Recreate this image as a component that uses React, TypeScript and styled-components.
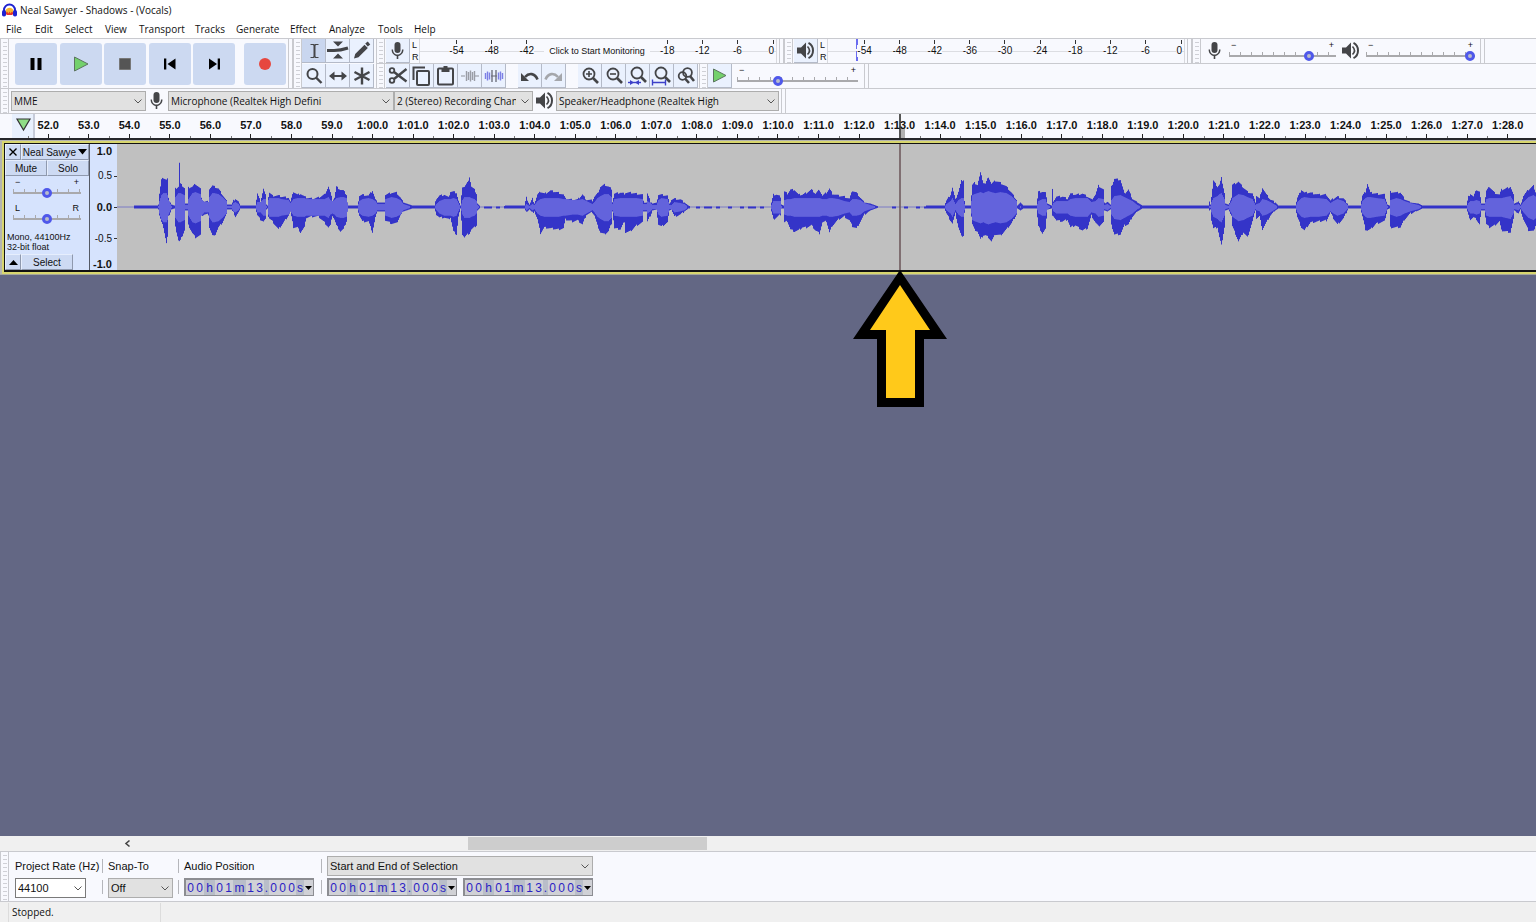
import React from 'react';
import styled, { createGlobalStyle, css } from 'styled-components';

const ui = '"Open Sans", "Noto Sans", sans-serif';
const arial = '"Liberation Sans", Arial, sans-serif';
const line = '#c9cacf';
const dock = '#f8f9fe';
const ink = '#444548';

const Global = createGlobalStyle`
  * { box-sizing: border-box; }
  html, body, #root { height: 100%; }
  body { margin: 0; overflow: hidden; background: #f0f0f0; color: #111; font-family: ${ui}; font-size: 10px; }
  button, select, input { font: inherit; color: inherit; margin: 0; }
  button { padding: 0; border: 0; background: none; }
  svg { display: block; flex: none; }
`;

const Window = styled.div`
  display: flex;
  flex-direction: column;
  height: 100vh;
`;

const TitleBar = styled.header`
  display: flex;
  align-items: center;
  gap: 3px;
  height: 20px;
  padding-left: 2px;
  background: #fff;
  white-space: nowrap;
`;

const MenuBar = styled.nav`
  display: grid;
  grid-template-columns: 29px 30px 40px 34px 56px 41px 54px 39px 49px 36px 30px;
  height: 18px;
  padding-left: 6px;
  background: #fff;
`;

const MenuButton = styled.button`
  text-align: left;
  white-space: nowrap;
`;

const Dock = styled.section`
  border-top: 1px solid ${line};
  background: ${dock};
`;

const DockTop = styled.div`
  display: flex;
`;

const DockRows = styled.div`
  flex: 1;
  min-width: 0;
`;

const Bar = styled.div<{ $tall?: boolean }>`
  display: flex;
  align-items: center;
  height: ${p => (p.$tall ? 50 : 25)}px;
  border-bottom: 1px solid ${line};
`;

const Grip = styled.span<{ $gap?: number }>`
  flex: none;
  align-self: stretch;
  width: 9px;
  margin-right: ${p => p.$gap ?? 0}px;
  border-left: 1px solid ${line};
  border-right: 1px solid ${line};
  background: repeating-linear-gradient(to bottom, transparent 0 3px, #cfd0d6 3px 4px) center / 4px 100% no-repeat;
`;

const BarEnd = styled.span<{ $gap?: number }>`
  flex: none;
  align-self: stretch;
  width: 5px;
  margin-left: ${p => p.$gap ?? 2}px;
  border-left: 1px solid ${line};
  border-right: 1px solid ${line};
`;

const TransportGroup = styled.div`
  display: flex;
  justify-content: space-between;
  width: 220px;
  margin-right: 9px;
`;

const TransportButton = styled.button`
  width: 42px;
  height: 42px;
  border-radius: 3px;
  background: #ccd9f1;
`;

const ToolGrid = styled.div`
  display: grid;
  grid-template-columns: repeat(3, 24px);
  grid-template-rows: 25px 24px;
  margin-right: 2px;
`;

const ToolButton = styled.button<{ $on?: boolean }>`
  flex: none;
  width: 24px;
  height: 24px;
  border-right: 1px solid #b4bac8;
  border-bottom: 1px solid #b4bac8;
  background: ${p => (p.$on ? '#c9d6ef' : '#eaf1fe')};
`;

const ToolGroup = styled.div<{ $gap?: number }>`
  display: flex;
  margin-right: ${p => p.$gap ?? 0}px;
`;

const Channels = styled.span`
  flex: none;
  width: 9px;
  padding-left: 2px;
  font: 9px/12px ${arial};
`;

const MeterBox = styled.div`
  flex: 0 1 358px;
  display: grid;
  grid-template-columns: 19px repeat(9, 1fr) 19px 2px;
  height: 24px;
  min-width: 0;
  border-left: 1px solid #d8d9de;
  border-right: 1px solid #d8d9de;
  background: linear-gradient(#dcdde2, #dcdde2) 0 12px / 100% 1px no-repeat;
  font: 10px/12px ${arial};
`;

const Mark = styled.span<{ $last?: boolean }>`
  display: flex;
  flex-direction: column;
  align-items: ${p => (p.$last ? 'flex-end' : 'center')};
  &::before { content: ''; width: 1px; height: 4px; margin: 1px 0; background: #333; }
  span { background: ${dock}; }
`;

const Monitor = styled.button`
  grid-column: span 3;
  height: 16px;
  margin-top: 4px;
  background: ${dock};
  font-size: 9px;
  white-space: nowrap;
`;

const Level = styled.span`
  justify-self: end;
  width: 2px;
  height: 24px;
  margin-right: -11px;
  background: repeating-linear-gradient(#6a6cf0 0 10px, transparent 10px 12px);
`;

const IconSlot = styled.span<{ $w: number }>`
  flex: none;
  display: flex;
  justify-content: center;
  width: ${p => p.$w}px;
`;

const SliderBox = styled.div<{ $w: number; $gap?: number }>`
  flex: none;
  display: flex;
  flex-direction: column;
  width: ${p => p.$w}px;
  margin-left: ${p => p.$gap ?? 0}px;
  font: 10px/9px ${arial};
`;

const Ends = styled.span`
  display: flex;
  justify-content: space-between;
  padding: 0 2px;
  font-size: 9px;
`;

const Range = styled.input`
  appearance: none;
  width: 100%;
  height: 11px;
  background:
    linear-gradient(#a9a9ac, #a9a9ac) 0 5px / 100% 2px no-repeat,
    repeating-linear-gradient(to right, #a9a9ac 0 1px, transparent 1px 11px) 0 2px / 100% 3px no-repeat;
  &::-webkit-slider-thumb {
    appearance: none;
    width: 10px;
    height: 10px;
    border: 3px solid #4f58ea;
    border-radius: 50%;
    background: #b9bccb;
  }
`;

const SelectWrap = styled.span<{ $w: number }>`
  position: relative;
  flex: none;
  width: ${p => p.$w}px;
  svg { position: absolute; right: 4px; top: 8px; pointer-events: none; }
`;

const Select = styled.select<{ $white?: boolean; $arial?: boolean }>`
  appearance: none;
  display: block;
  width: 100%;
  height: 20px;
  padding: 0 16px 0 2px;
  border: 1px solid ${p => (p.$white ? '#7a7a7a' : '#adadad')};
  border-radius: 0;
  background: ${p => (p.$white ? '#fff' : '#e1e1e1')};
  overflow: hidden;
  ${p => p.$arial && css`font: 11px ${arial};`}
`;

const Timeline = styled.section`
  display: flex;
  height: 24px;
  padding-left: 12px;
  background: ${dock};
`;

const PinButton = styled.button`
  flex: none;
  width: 23px;
  border-right: 2px solid #c6cbd9;
  background: #e8f0fd;
`;

const RulerClip = styled.div`
  flex: 1;
  min-width: 0;
`;

const Ruler = styled.div`
  display: grid;
  grid-template-columns: repeat(37, 1fr);
  height: 24px;
  margin: 0 8px 0 -7px;
  font: bold 11px/23px ${arial};
`;

const Tick = styled.span<{ $cursor?: boolean }>`
  display: flex;
  justify-content: center;
  min-width: 0;
  background:
    linear-gradient(#222, #222) center bottom / 1px 4px no-repeat,
    linear-gradient(#777, #777) left bottom / 1px 2px no-repeat;
  ${p => p.$cursor && css`
    background:
      linear-gradient(#555, #555) center / 2px 100% no-repeat,
      linear-gradient(#b0b0b0, #b0b0b0) 22px 14px / 4px 10px no-repeat;
  `}
`;

const Tracks = styled.main`
  flex: 1;
  min-height: 0;
  background: #636784;
`;

const Track = styled.article`
  display: flex;
  height: 137px;
  border-top: 2px solid #26272b;
  border-bottom: 1px solid #a6a79a;
  background: #b4b4b0;
  padding: 1px 0 0 2px;
`;

const TrackFrame = styled.div`
  flex: 1;
  min-width: 0;
  display: flex;
  border: 2px solid #d8d66e;
  border-right: 0;
`;

const TrackInner = styled.div`
  flex: 1;
  min-width: 0;
  display: flex;
  border: 1px solid #111;
  border-bottom-width: 2px;
  border-right: 0;
`;

const Panel = styled.aside`
  flex: none;
  display: flex;
  flex-direction: column;
  width: 84px;
  background: #d6e3fd;
  font: 10px/15px ${arial};
`;

const PanelRow = styled.div<{ $w?: number }>`
  display: flex;
  width: ${p => p.$w ?? 84}px;
`;

const PanelButton = styled.button<{ $w?: number }>`
  flex: ${p => (p.$w ? `0 0 ${p.$w}px` : '1')};
  display: flex;
  align-items: center;
  justify-content: center;
  gap: 2px;
  height: 16px;
  border: 1px solid #e6eefd;
  border-right-color: #8f99ae;
  border-bottom-color: #8f99ae;
  background: #cddaf3;
  white-space: nowrap;
`;

const PanelSliders = styled.div`
  display: grid;
  gap: 6px;
  padding: 2px 0 0 8px;
`;

const Info = styled.p`
  margin: auto 0 2px 2px;
  font-size: 9px;
  line-height: 10px;
`;

const VRuler = styled.div`
  flex: none;
  display: grid;
  grid-template-rows: 14px 36px 26px 1fr 13px;
  align-items: center;
  width: 28px;
  border-left: 1px solid #555a66;
  background: #d6e3fd;
  font: 10px/12px ${arial};
`;

const Amp = styled.span<{ $bold?: boolean; $tick?: boolean }>`
  display: flex;
  align-items: center;
  justify-content: flex-end;
  padding-right: ${p => (p.$tick ? 0 : 5)}px;
  font-weight: ${p => (p.$bold ? 'bold' : 'normal')};
  font-size: ${p => (p.$bold ? 11 : 10)}px;
  ${p => p.$tick && css`&::after { content: ''; width: 3px; height: 1px; margin-left: 2px; background: #333; }`}
`;

const WaveArea = styled.div`
  position: relative;
  flex: 1;
  min-width: 0;
  background: #c0c0c0;
  > svg:first-child { width: 100%; height: 100%; }
`;

const Pointer = styled.svg`
  position: absolute;
  left: 55.2%;
  top: 126px;
  transform: translateX(-50%);
`;

const ScrollBar = styled.div`
  display: flex;
  align-items: center;
  height: 15px;
  padding-left: 120px;
  background: #f0f0f0;
`;

const ScrollTrack = styled.div`
  flex: 1;
  height: 13px;
`;

const Thumb = styled.div`
  width: 17%;
  height: 13px;
  margin-left: 23.8%;
  background: #cdcdcd;
`;

const SelectionBar = styled.section`
  display: flex;
  height: 51px;
  border-top: 1px solid ${line};
  border-bottom: 1px solid ${line};
  background: ${dock};
  font: 11px/20px ${arial};
`;

const Field = styled.div<{ $w: number }>`
  display: grid;
  grid-template-rows: 20px 20px;
  row-gap: 2px;
  flex: none;
  width: ${p => p.$w}px;
  padding-top: 4px;
  white-space: nowrap;
`;

const Divider = styled.span`
  flex: none;
  width: 1px;
  margin: 7px 5px 0 0;
  height: 35px;
  background: linear-gradient(#b5b6bb 0 14px, transparent 14px 21px, #b5b6bb 21px);
`;

const Times = styled.div`
  display: flex;
  gap: 6px;
`;

const TimeBox = styled.div`
  display: flex;
  width: 130px;
  height: 18px;
  border: 1px solid #8c8d92;
  border-width: 2px 1px 1px 2px;
  background: #b9bec9;
  color: #2a22c4;
  font: 12px/16px ${arial};
  text-align: center;
`;

const Digit = styled.span`
  width: 9px;
  background: #d0d1d6;
`;

const Unit = styled.span<{ $w: number }>`
  width: ${p => p.$w}px;
`;

const TimeMenu = styled.button`
  flex: 1;
  display: flex;
  align-items: center;
  justify-content: center;
  background: #d0d1d6;
`;

const Status = styled.footer`
  display: flex;
  height: 20px;
  padding: 1px 0 0 8px;
  background: #f0f0f0;
  line-height: 19px;
`;

const StatusCell = styled.span`
  width: 153px;
  padding-left: 3px;
  border-left: 1px solid #dcdcdc;
  border-right: 1px solid #dcdcdc;
`;

const menus = ['File', 'Edit', 'Select', 'View', 'Transport', 'Tracks', 'Generate', 'Effect', 'Analyze', 'Tools', 'Help'];

/* Envelope of the vocal take: x, peak above zero, peak below zero, RMS level. */
const envelope: number[][] = [
  [117, 0, 0, 0], [133, 0, 0, 0], [134, 1, 1, 0], [157, 1, 1, 0], [158, 2, 2, 1], [159, 13, 8, 6], [161, 27, 15, 12], [163, 29, 20, 14], [166, 27, 36, 14], [167, 28, 30, 12], [168, 8, 9, 7], [171, 2, 2, 1], [174, 1, 1, 0],
  [175, 18, 20, 10], [178, 20, 33, 14], [179, 44, 34, 14], [180, 23, 33, 14], [184, 19, 23, 12], [185, 3, 3, 2], [187, 3, 3, 2], [188, 19, 18, 8], [192, 20, 26, 14], [195, 23, 30, 15], [200, 18, 28, 13], [201, 8, 8, 8], [204, 5, 7, 5], [208, 5, 7, 5],
  [209, 18, 20, 10], [212, 21, 28, 14], [214, 20, 29, 14], [218, 18, 20, 13], [222, 12, 15, 10], [226, 6, 7, 6], [227, 2, 2, 1], [231, 2, 2, 1], [233, 6, 5, 4], [235, 8, 9, 5], [238, 5, 5, 3], [240, 1, 1, 0], [255, 1, 1, 0],
  [257, 13, 8, 5], [260, 5, 12, 5], [263, 18, 14, 8], [265, 12, 12, 8], [266, 2, 2, 1], [267, 1, 1, 0], [268, 10, 9, 7], [269, 14, 11, 9], [272, 11, 14, 9], [278, 11, 22, 9], [281, 10, 18, 8], [288, 9, 8, 7], [290, 5, 4, 4], [293, 15, 20, 8], [297, 12, 20, 9], [300, 13, 25, 9], [304, 10, 20, 9], [306, 9, 10, 8], [312, 8, 9, 8], [318, 9, 9, 8], [324, 12, 15, 8], [328, 20, 20, 10], [330, 14, 18, 7], [332, 6, 8, 6], [334, 9, 12, 7], [336, 20, 18, 9], [340, 17, 24, 10], [343, 16, 22, 10], [346, 12, 14, 9], [347, 4, 4, 4], [348, 1, 1, 0], [357, 1, 1, 0],
  [359, 11, 8, 6], [362, 12, 14, 8], [368, 11, 14, 9], [372, 16, 25, 8], [375, 7, 10, 6], [377, 4, 4, 3], [384, 4, 4, 3], [385, 12, 13, 8], [391, 14, 16, 10], [396, 14, 16, 9], [400, 9, 8, 7], [403, 4, 4, 3], [409, 2, 2, 1], [412, 1, 1, 0], [434, 1, 1, 0],
  [436, 8, 7, 3], [439, 11, 10, 6], [444, 12, 10, 8], [448, 9, 12, 8], [450, 15, 10, 8], [453, 15, 24, 9], [456, 14, 27, 8], [458, 6, 9, 4], [460, 1, 1, 0], [462, 20, 27, 7], [464, 20, 30, 10], [467, 24, 27, 10], [469, 30, 26, 10], [471, 20, 22, 9], [474, 17, 20, 8], [476, 13, 18, 6], [477, 3, 3, 2], [479, 1, 1, 0], [480, 0, 1, 0], [503, 0, 1, 0], [505, 1, 1, 0], [524, 1, 1, 0],
  [526, 9, 5, 3], [529, 2, 2, 1], [532, 8, 5, 3], [534, 3, 4, 2], [537, 12, 12, 6], [540, 15, 26, 8], [544, 13, 20, 9], [550, 16, 21, 9], [558, 14, 22, 9], [563, 12, 21, 8], [565, 8, 12, 8], [572, 7, 14, 7], [577, 7, 13, 7], [582, 12, 17, 8], [586, 7, 7, 6], [592, 6, 5, 3], [594, 10, 8, 5], [597, 13, 18, 9], [600, 20, 25, 11], [604, 22, 27, 13], [608, 20, 24, 13], [611, 18, 16, 10], [612, 5, 4, 3], [614, 13, 21, 8], [620, 14, 22, 9], [624, 13, 14, 9], [625, 14, 25, 9], [630, 14, 24, 9], [636, 13, 18, 9], [642, 12, 15, 8], [643, 5, 4, 3], [646, 4, 4, 3], [647, 13, 14, 6], [650, 5, 8, 4], [652, 3, 3, 2], [656, 4, 2, 2], [658, 12, 17, 7], [661, 12, 19, 9], [667, 11, 15, 8], [669, 3, 3, 2], [671, 7, 2, 2], [674, 8, 9, 5], [680, 7, 7, 4], [684, 4, 4, 3], [688, 1, 1, 0], [690, 0, 1, 0], [770, 0, 1, 0],
  [771, 4, 4, 2], [773, 12, 12, 6], [776, 12, 10, 6], [780, 10, 7, 6], [781, 2, 1, 1], [783, 1, 1, 0], [784, 15, 15, 7], [787, 13, 14, 8], [790, 17, 22, 8], [794, 17, 24, 9], [798, 12, 23, 9], [802, 12, 20, 9], [806, 14, 20, 9], [811, 17, 18, 9], [815, 13, 23, 9], [819, 17, 26, 9], [822, 11, 15, 8], [826, 14, 14, 8], [829, 18, 25, 9], [832, 13, 18, 9], [838, 11, 12, 8], [844, 10, 9, 6], [849, 8, 13, 5], [852, 16, 19, 8], [856, 14, 21, 8], [860, 9, 14, 7], [864, 4, 7, 4], [870, 3, 3, 2], [878, 0, 0, 0], [890, 0, 0, 0], [891, 0, 1, 0], [925, 0, 1, 0], [926, 1, 1, 0], [944, 1, 1, 0],
  [946, 6, 6, 3], [950, 12, 13, 6], [952, 19, 16, 9], [955, 7, 6, 3], [958, 15, 20, 7], [961, 26, 29, 9], [963, 27, 28, 9], [964, 6, 5, 3], [965, 1, 1, 0], [970, 1, 1, 0], [972, 22, 17, 12], [974, 24, 22, 13], [977, 22, 24, 14], [980, 34, 32, 15], [983, 24, 28, 14], [985, 23, 28, 15], [988, 30, 30, 16], [991, 23, 34, 15], [995, 26, 27, 14], [1000, 24, 28, 15], [1006, 20, 22, 14], [1011, 14, 16, 11], [1016, 7, 7, 6], [1017, 1, 1, 0], [1020, 4, 3, 1], [1023, 1, 1, 0], [1036, 1, 1, 0],
  [1038, 15, 19, 6], [1042, 15, 26, 8], [1045, 14, 22, 8], [1047, 3, 2, 2], [1051, 1, 1, 0], [1052, 17, 9, 2], [1053, 6, 8, 4], [1056, 10, 13, 6], [1062, 10, 14, 6], [1067, 8, 12, 6], [1070, 13, 20, 8], [1075, 12, 18, 9], [1082, 13, 23, 9], [1087, 10, 21, 9], [1091, 7, 8, 5], [1095, 12, 15, 6], [1098, 21, 19, 9], [1103, 17, 15, 8], [1104, 4, 3, 2], [1107, 5, 4, 3], [1110, 2, 2, 1], [1111, 20, 18, 7], [1114, 28, 27, 11], [1120, 27, 27, 12], [1124, 13, 18, 10], [1128, 17, 17, 8], [1132, 8, 9, 6], [1137, 4, 4, 2], [1142, 1, 1, 0], [1208, 1, 1, 0],
  [1209, 6, 3, 1], [1210, 2, 2, 1], [1211, 10, 13, 5], [1213, 26, 21, 9], [1217, 20, 20, 11], [1219, 22, 30, 13], [1221, 29, 38, 14], [1224, 14, 20, 8], [1225, 3, 3, 2], [1228, 2, 2, 1], [1231, 9, 8, 6], [1232, 22, 19, 9], [1238, 25, 34, 13], [1243, 19, 25, 12], [1247, 15, 30, 10], [1252, 13, 14, 8], [1255, 4, 3, 2], [1256, 11, 11, 3], [1259, 8, 9, 4], [1262, 19, 22, 8], [1266, 12, 15, 7], [1270, 7, 8, 5], [1275, 4, 3, 2], [1278, 1, 1, 0], [1295, 1, 1, 0],
  [1297, 9, 10, 5], [1301, 17, 20, 9], [1304, 14, 23, 10], [1310, 14, 15, 9], [1318, 12, 14, 9], [1326, 12, 13, 8], [1330, 6, 5, 4], [1333, 8, 11, 6], [1337, 10, 17, 8], [1343, 8, 11, 6], [1347, 3, 3, 2], [1348, 1, 1, 0], [1360, 1, 1, 0], [1362, 11, 9, 6], [1365, 15, 22, 9], [1367, 23, 23, 10], [1370, 14, 22, 10], [1376, 13, 16, 9], [1384, 12, 14, 8], [1387, 2, 2, 1], [1389, 1, 1, 0], [1390, 15, 20, 7], [1396, 14, 20, 9], [1400, 14, 20, 8], [1404, 8, 12, 6], [1410, 4, 6, 4], [1418, 3, 3, 2], [1422, 1, 1, 0], [1466, 1, 1, 0],
  [1468, 10, 8, 4], [1470, 13, 12, 6], [1473, 10, 10, 6], [1476, 17, 12, 7], [1479, 15, 17, 6], [1481, 3, 3, 2], [1484, 3, 3, 2], [1486, 16, 17, 8], [1489, 20, 20, 9], [1494, 14, 18, 9], [1499, 12, 14, 9], [1501, 17, 23, 9], [1505, 18, 24, 10], [1510, 20, 25, 11], [1513, 12, 12, 6], [1514, 3, 3, 2], [1518, 5, 6, 3], [1520, 2, 2, 1], [1523, 11, 12, 5], [1528, 17, 23, 10], [1533, 21, 24, 12], [1536, 12, 15, 10],
];

function wavePaths() {
  let peak = '';
  let rms = '';
  let i = 0;
  for (let x = 117; x < 1536; x++) {
    while (i < envelope.length - 2 && envelope[i + 1][0] <= x) i++;
    const a = envelope[i];
    const b = envelope[i + 1];
    const t = (x - a[0]) / (b[0] - a[0]);
    const at = (k: number) => a[k] + (b[k] - a[k]) * t;
    const wobble = ((x * 7919) % 13) / 13 - 0.5;
    const up = at(1) > 4 ? at(1) + wobble * 2 : at(1);
    const down = at(2) > 4 ? at(2) - wobble * 2 : at(2);
    const px = x - 117 + 0.5;
    const faint = at(1) < 0.1 && at(2) <= 1;
    const gap = faint && ((x >> 2) * 37) % 11 > 4;
    if (up + down > 0.5 && !gap) peak += `M${px} ${(63 - up).toFixed(1)}V${(64 + down).toFixed(1)}`;
    if (at(3) >= 1) rms += `M${px} ${(63.5 - at(3)).toFixed(1)}V${(63.5 + at(3) * 1.1).toFixed(1)}`;
  }
  return { peak, rms };
}
const wave = wavePaths();

const timeLabels = Array.from({ length: 37 }, (_, i) => {
  const s = 52 + i;
  return s < 60 ? `${s}.0` : `1:${String(s - 60).padStart(2, '0')}.0`;
});

const Icon = ({ children, w = 24, h = 24, sw = 2 }: { children: React.ReactNode; w?: number; h?: number; sw?: number }) => (
  <svg width={w} height={h} viewBox={`0 0 ${w} ${h}`} fill="none" stroke={ink} strokeWidth={sw} aria-hidden="true">{children}</svg>
);

const Chevron = () => (
  <svg width="8" height="5" viewBox="0 0 8 5" fill="none" stroke="#555" aria-hidden="true"><path d="M.5 .5 4 4 7.5 .5" /></svg>
);

const MicShape = () => (
  <g stroke="none" fill={ink}>
    <rect x="8.500" y="3" width="6" height="11" rx="3" />
    <path d="M5.500 10.500H7c0 3 2 5 4.500 5s4.500-2 4.500-5h1.500c0 3.500-2.200 6-5.200 6.400V20h-1.600v-3.100c-3-.4-5.100-2.900-5.100-6.400Z" />
  </g>
);

const SpeakerShape = () => (
  <g>
    <path d="M3 8.500h4l5-5v16l-5-5H3Z" fill={ink} stroke="none" />
    <path d="M13.500 7.500q4 4 0 8" strokeWidth="1.600" />
    <path d="M14.500 3.800c6 3 6 12.400 0 15.400" />
  </g>
);

const GreenPlay = ({ d }: { d: string }) => <path d={d} fill="#73d16c" stroke="#5c7560" strokeWidth="1" />;

const Zoomer = ({ children, low }: { children?: React.ReactNode; low?: boolean }) => (
  <Icon>
    <circle cx="11" cy={low ? 9 : 10} r="5.500" strokeWidth="1.800" />
    <path d={low ? 'm15 13 5 5' : 'm15 14 5 5'} strokeWidth="2.600" />
    {children}
  </Icon>
);

const Drop = ({ label, value, w, white, arialFont }: { label: string; value: string; w: number; white?: boolean; arialFont?: boolean }) => (
  <SelectWrap $w={w}>
    <Select aria-label={label} $white={white} $arial={arialFont}><option>{value}</option></Select>
    <Chevron />
  </SelectWrap>
);

const Slider = ({ label, w, value, gap, ends = ['−', '+'] }: { label: string; w: number; value: number; gap?: number; ends?: string[] }) => (
  <SliderBox $w={w} $gap={gap}>
    <Ends><span>{ends[0]}</span><span>{ends[1]}</span></Ends>
    <Range type="range" aria-label={label} min={0} max={100} defaultValue={value} />
  </SliderBox>
);

const Meter = ({ live }: { live?: boolean }) => {
  const marks = live ? [-54, -48, -42, -36, -30, -24, -18, -12, -6] : [-54, -48, -42];
  return (
    <MeterBox>
      {live ? <Level /> : <span />}
      {marks.map(m => <Mark key={m}><span>{m}</span></Mark>)}
      {!live && <Monitor>Click to Start Monitoring</Monitor>}
      {!live && [-18, -12, -6].map(m => <Mark key={m}><span>{m}</span></Mark>)}
      <Mark $last><span>0</span></Mark>
    </MeterBox>
  );
};

const TimeControl = ({ label }: { label: string }) => {
  const widths: Record<string, number> = { h: 11, m: 13, '.': 5, s: 8 };
  return (
    <TimeBox role="group" aria-label={label}>
      {[...'00h01m13.000s'].map((c, i) => (widths[c] ? <Unit key={i} $w={widths[c]}>{c}</Unit> : <Digit key={i}>{c}</Digit>))}
      <TimeMenu aria-label={`${label} format`}>
        <svg width="7" height="4" viewBox="0 0 7 4"><path d="M0 0h7L3.500 4Z" fill="#000" /></svg>
      </TimeMenu>
    </TimeBox>
  );
};

const transport: [string, React.ReactNode][] = [
  ['Pause', <path key="p" d="M15.500 15h4v12h-4zM22.500 15h4v12h-4z" fill="#000" stroke="none" />],
  ['Play', <GreenPlay key="p" d="M14.500 14v14L28 21Z" />],
  ['Stop', <path key="p" d="M15.500 15.500h11v11h-11z" fill="#555" stroke="#777" strokeWidth="1" />],
  ['Skip to Start', <path key="p" d="M15 15.500h2.300v11H15zM26.500 15.500v11L18.500 21Z" fill="#000" stroke="none" />],
  ['Skip to End', <path key="p" d="M27 15.500h-2.300v11H27zM16 15.500v11l8-5.500Z" fill="#000" stroke="none" />],
];

export default function App() {
  return (
    <Window>
      <Global />
      <TitleBar>
        <svg width="15" height="14" viewBox="0 0 15 14" aria-hidden="true">
          <path d="M2 9V7a5.500 5.500 0 0 1 11 0v2" fill="none" stroke="#1f22d0" strokeWidth="2" />
          <path d="M3.500 8.500c0-5 8-5 8 0L10 12H5Z" fill="#f9b52a" />
          <path d="m3.500 10.500 1.500-2 1.500 2 1-2 1 2 1.500-2 1.500 2-1.500 1.500H5Z" fill="#e5342d" />
          <rect x="0" y="7" width="4" height="6.500" rx="1.800" fill="#1f22d0" />
          <rect x="11" y="7" width="4" height="6.500" rx="1.800" fill="#1f22d0" />
        </svg>
        <span>Neal Sawyer - Shadows - (Vocals)</span>
      </TitleBar>
      <MenuBar>{menus.map(m => <MenuButton key={m}>{m}</MenuButton>)}</MenuBar>

      <Dock>
        <DockTop>
          <Bar $tall>
            <Grip $gap={6} />
            <TransportGroup>
              {transport.map(([name, shape]) => (
                <TransportButton key={name} aria-label={name}><Icon w={42} h={42}>{shape}</Icon></TransportButton>
              ))}
            </TransportGroup>
            <TransportButton aria-label="Record">
              <Icon w={42} h={42}><circle cx="21" cy="21" r="6" fill="#e6473f" stroke="none" /></Icon>
            </TransportButton>
            <BarEnd />
          </Bar>
          <Bar $tall>
            <Grip />
            <ToolGrid>
              <ToolButton $on aria-label="Selection Tool"><Icon sw={1.2}><path d="M8.500 5.500h3l1 1 1-1h3M8.500 18.500h3l1-1 1 1h3" /><path d="M12.500 6v12" strokeWidth="2" /></Icon></ToolButton>
              <ToolButton aria-label="Envelope Tool"><Icon><path d="M7 2.500h10L12 7.500ZM7 19.500h10l-5-5Z" fill={ink} stroke="none" /><path d="M1 11.500h7c5 0 8-.5 14-2.500" strokeWidth="3" /></Icon></ToolButton>
              <ToolButton aria-label="Draw Tool"><Icon><path d="M4 19.500 5.200 15 14.500 5.700l3.300 3.300-9.300 9.300Z" fill={ink} stroke="none" /><path d="m16.500 6 2.500-2" strokeWidth="4" /></Icon></ToolButton>
              <ToolButton aria-label="Zoom Tool"><Icon><circle cx="10.500" cy="10" r="5" /><path d="m14 13.500 5.500 5.500" strokeWidth="2.400" /></Icon></ToolButton>
              <ToolButton aria-label="Time Shift Tool"><Icon><path d="M5 12h14" /><path d="M8.500 7.500 3 12l5.500 4.500ZM15.500 7.500 21 12l-5.500 4.500Z" fill={ink} stroke="none" /></Icon></ToolButton>
              <ToolButton aria-label="Multi-Tool"><Icon sw={2.4}><path d="M12 3.500v17M4.500 8l15 8M19.500 8l-15 8" /></Icon></ToolButton>
            </ToolGrid>
          </Bar>
          <DockRows>
            <Bar>
              <Grip $gap={1} />
              <ToolButton aria-label="Recording Meter"><Icon><MicShape /></Icon></ToolButton>
              <Channels>L<br />R</Channels>
              <Meter />
              <BarEnd />
              <Grip $gap={1} />
              <ToolButton aria-label="Playback Meter"><Icon><SpeakerShape /></Icon></ToolButton>
              <Channels>L<br />R</Channels>
              <Meter live />
              <BarEnd />
              <Grip />
              <IconSlot $w={28}><Icon><MicShape /></Icon></IconSlot>
              <Slider label="Recording Volume" w={107} value={77} />
              <IconSlot $w={30}><Icon><SpeakerShape /></Icon></IconSlot>
              <Slider label="Playback Volume" w={109} value={100} />
              <BarEnd $gap={5} />
            </Bar>
            <Bar>
              <Grip $gap={1} />
              <ToolGroup $gap={12}>
                <ToolButton aria-label="Cut"><Icon sw={1.8}><circle cx="6" cy="6.500" r="2.300" /><circle cx="6" cy="16.500" r="2.300" /><path d="m8 8 12.500 9.500M8 15 20.500 5" strokeWidth="2.400" /></Icon></ToolButton>
                <ToolButton aria-label="Copy"><Icon><path d="M3.500 16V3.500H15" /><rect x="7" y="7" width="12" height="14" rx="1" /></Icon></ToolButton>
                <ToolButton aria-label="Paste"><Icon><rect x="4" y="4.500" width="15" height="16" rx="1" /><path d="M7.500 4h8v4h-8zM9.500 2h4v3h-4z" fill={ink} stroke="none" /></Icon></ToolButton>
                <ToolButton aria-label="Trim"><Icon sw={1}><path d="M3 12h4M17 12h4" stroke="#8d9099" /><path d="M8.500 7v10M10.500 8v8M12.500 6.500v11M14.500 8v8M16.500 7v10" stroke="#9a9da6" strokeWidth="1.400" /></Icon></ToolButton>
                <ToolButton aria-label="Silence"><Icon sw={1}><path d="M9 12h6" stroke="#667" /><path d="M3.500 9v6M5.500 7.500v9M7.500 8.500v7M16.500 8.500v7M18.500 7.500v9M20.500 9v6" stroke="#7d80e6" strokeWidth="1.400" /><path d="M10 6v12M14 6v12" stroke="#666974" strokeWidth="1.300" /></Icon></ToolButton>
              </ToolGroup>
              <ToolGroup $gap={12}>
                <ToolButton aria-label="Undo"><Icon sw={2.6}><path d="M7 13c4-4.500 10-4 12.500 2.500" /><path d="M3 9v8h8Z" fill={ink} stroke="none" /></Icon></ToolButton>
                <ToolButton aria-label="Redo"><Icon sw={2.6}><path d="M16 13c-4-4.500-10-4-12.500 2.500" stroke="#a4a6ab" /><path d="M20 9v8h-8Z" fill="#a4a6ab" stroke="none" /></Icon></ToolButton>
              </ToolGroup>
              <ToolGroup $gap={1}>
                <ToolButton aria-label="Zoom In"><Zoomer><path d="M8 10h6M11 7v6" strokeWidth="1.600" /></Zoomer></ToolButton>
                <ToolButton aria-label="Zoom Out"><Zoomer><path d="M8 10h6" strokeWidth="1.600" /></Zoomer></ToolButton>
                <ToolButton aria-label="Fit Selection"><Zoomer low><path d="M2 18.500h13" stroke="#3c40c8" strokeWidth="1.400" /><path d="M4 16v5l4-2.500ZM13 16v5l-4-2.500Z" fill="#3c40c8" stroke="none" /></Zoomer></ToolButton>
                <ToolButton aria-label="Fit Project"><Zoomer low><path d="M2.500 15.500v6M15.500 15.500v6M3 18.500h12" stroke="#3c40c8" strokeWidth="1.400" /></Zoomer></ToolButton>
                <ToolButton aria-label="Zoom Toggle"><Icon sw={1.8}><circle cx="8.500" cy="12" r="3.800" /><circle cx="13.500" cy="8.500" r="4.400" /><path d="m11 14.500 4 4.500M16 12l4 5" strokeWidth="2.600" /></Icon></ToolButton>
              </ToolGroup>
              <Grip />
              <ToolButton aria-label="Play at Speed"><Icon><GreenPlay d="M5.500 5v13L18 11.500Z" /></Icon></ToolButton>
              <Slider label="Playback Speed" w={121} value={32} gap={5} />
              <BarEnd $gap={6} />
            </Bar>
          </DockRows>
        </DockTop>
        <Bar>
          <Grip $gap={2} />
          <Drop label="Audio Host" value="MME" w={135} />
          <IconSlot $w={22}><Icon><MicShape /></Icon></IconSlot>
          <Drop label="Recording Device" value="Microphone (Realtek High Defini" w={226} />
          <Drop label="Recording Channels" value="2 (Stereo) Recording Channels" w={139} />
          <IconSlot $w={23}><Icon><SpeakerShape /></Icon></IconSlot>
          <Drop label="Playback Device" value="Speaker/Headphone (Realtek High" w={223} />
          <BarEnd />
        </Bar>
      </Dock>

      <Timeline>
        <PinButton aria-label="Pin Play Head"><Icon w={22}><path d="M5 5h13l-6.500 11Z" fill="#8fdc86" stroke="#333" strokeWidth="1.200" /></Icon></PinButton>
        <RulerClip>
          <Ruler>{timeLabels.map(t => <Tick key={t} $cursor={t === '1:13.0'}>{t}</Tick>)}</Ruler>
        </RulerClip>
      </Timeline>

      <Tracks>
        <Track>
          <TrackFrame>
            <TrackInner>
              <Panel>
                <PanelRow>
                  <PanelButton $w={16} aria-label="Close track"><svg width="8" height="8" viewBox="0 0 8 8"><path d="m.5.500 7 7m0-7-7 7" stroke="#000" strokeWidth="1.400" /></svg></PanelButton>
                  <PanelButton>Neal Sawye<svg width="9" height="6" viewBox="0 0 9 6"><path d="M0 0h9L4.500 5.500Z" fill="#000" /></svg></PanelButton>
                </PanelRow>
                <PanelRow><PanelButton>Mute</PanelButton><PanelButton>Solo</PanelButton></PanelRow>
                <PanelSliders>
                  <Slider label="Gain" w={68} value={50} />
                  <Slider label="Pan" w={68} value={50} ends={['L', 'R']} />
                </PanelSliders>
                <Info>Mono, 44100Hz<br />32-bit float</Info>
                <PanelRow $w={68}>
                  <PanelButton $w={16} aria-label="Collapse track"><svg width="9" height="5" viewBox="0 0 9 5"><path d="M0 5h9L4.500 0Z" fill="#000" /></svg></PanelButton>
                  <PanelButton>Select</PanelButton>
                </PanelRow>
              </Panel>
              <VRuler>
                <Amp $bold>1.0</Amp><Amp $tick>0.5</Amp><Amp $bold $tick>0.0</Amp><Amp $tick>-0.5</Amp><Amp $bold>-1.0</Amp>
              </VRuler>
              <WaveArea>
                <svg viewBox="0 0 1419 127" preserveAspectRatio="none" fill="none" role="img" aria-label="Vocals waveform">
                  <path d="M0 63.500H1419" stroke="#7c7cc6" />
                  <path d={wave.peak} stroke="#3232c8" />
                  <path d={wave.rms} stroke="#6464dc" />
                  <path d="M783 0V127" stroke="#6b5558" strokeWidth="1.500" />
                </svg>
                <Pointer width="94" height="138" viewBox="0 0 94 138" aria-hidden="true">
                  <path d="M47 0 94 69H71v68H24V69H0Z" fill="#000" />
                  <path d="M47 15 77 60H62v68H33V60H17Z" fill="#ffc91a" />
                </Pointer>
              </WaveArea>
            </TrackInner>
          </TrackFrame>
        </Track>
      </Tracks>

      <ScrollBar>
        <button aria-label="Scroll left"><svg width="15" height="13" viewBox="0 0 15 13"><path d="M9.500 3.500 6 6.500l3.500 3" fill="none" stroke="#444" strokeWidth="1.600" /></svg></button>
        <ScrollTrack><Thumb /></ScrollTrack>
      </ScrollBar>

      <SelectionBar>
        <Grip $gap={6} />
        <Field $w={87}>
          <span>Project Rate (Hz)</span>
          <Drop label="Project Rate (Hz)" value="44100" w={71} white arialFont />
        </Field>
        <Divider />
        <Field $w={70}>
          <span>Snap-To</span>
          <Drop label="Snap-To" value="Off" w={65} arialFont />
        </Field>
        <Divider />
        <Field $w={137}>
          <span>Audio Position</span>
          <TimeControl label="Audio Position" />
        </Field>
        <Divider />
        <Field $w={266}>
          <Drop label="Selection mode" value="Start and End of Selection" w={266} arialFont />
          <Times><TimeControl label="Selection start" /><TimeControl label="Selection end" /></Times>
        </Field>
      </SelectionBar>
      <Status><StatusCell>Stopped.</StatusCell></Status>
    </Window>
  );
}
